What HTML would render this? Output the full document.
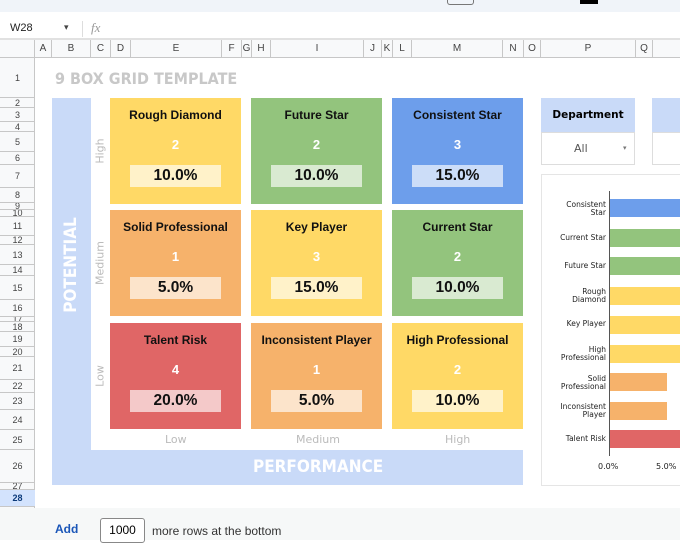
<!DOCTYPE html>
<html><head><meta charset="utf-8"><style>
*{margin:0;padding:0;box-sizing:border-box}
body{width:680px;height:540px;overflow:hidden;background:#fff;font-family:"Liberation Sans",sans-serif;position:relative}
.a{position:absolute}
.ch{position:absolute;top:40px;height:18px;border-right:1px solid #c7c7c7;font-size:10px;color:#444;text-align:center;line-height:18px}
.rh{position:absolute;left:0;width:35px;border-bottom:1px solid #c7c7c7;font-size:9px;color:#444;text-align:center;display:flex;align-items:center;justify-content:center;overflow:hidden}
.box{position:absolute;width:131px;height:106px;text-align:center;font-family:"Liberation Sans",sans-serif}
.box .t{position:absolute;top:10px;width:100%;font-size:12px;font-weight:bold;color:#111}
.box .n{position:absolute;top:39px;width:100%;font-size:13px;font-weight:bold;color:#fff}
.box .p{position:absolute;top:67px;left:20px;width:91px;height:22px;background:rgba(255,255,255,.65);font-size:15.5px;font-weight:bold;line-height:22px;color:#111}
.y{background:#ffd966}.g{background:#93c47d}.b{background:#6d9eeb}.o{background:#f6b26b}.r{background:#e06666}
.lbl{position:absolute;font-size:11px;color:#bbb;font-family:"DejaVu Sans",sans-serif}
.bl{position:absolute;right:74px;font-size:7.5px;color:#222;text-align:right;line-height:8px;font-family:"DejaVu Sans",sans-serif}
.bar{position:absolute;left:610px;height:18px}
</style></head><body>
<div class="a" style="left:0;top:0;width:680px;height:12px;background:#f0f4f9"></div>
<div class="a" style="left:447px;top:0;width:27px;height:5px;border:1px solid #777;border-top:none;border-radius:0 0 3px 3px"></div>
<div class="a" style="left:580px;top:0;width:18px;height:4px;background:#000"></div>
<div class="a" style="left:10px;top:22px;font-size:11px;color:#222">W28</div>
<div class="a" style="left:64px;top:22px;font-size:9px;color:#444">▾</div>
<div class="a" style="left:82px;top:21px;width:1px;height:16px;background:#ddd"></div>
<div class="a" style="left:91px;top:20px;font-size:13px;color:#999;font-style:italic;font-family:'Liberation Serif',serif">fx</div>
<div class="a" style="left:0;top:38px;width:680px;height:2px;background:#e1e1e1"></div>
<div class="a" style="left:0;top:40px;width:680px;height:18px;background:#f8f9fa;border-bottom:1px solid #c7c7c7"></div>
<div class="ch" style="left:0;width:35px"></div>
<div class="ch" style="left:35px;width:17px">A</div>
<div class="ch" style="left:52px;width:39px">B</div>
<div class="ch" style="left:91px;width:20px">C</div>
<div class="ch" style="left:111px;width:20px">D</div>
<div class="ch" style="left:131px;width:91px">E</div>
<div class="ch" style="left:222px;width:20px">F</div>
<div class="ch" style="left:242px;width:10px">G</div>
<div class="ch" style="left:252px;width:19px">H</div>
<div class="ch" style="left:271px;width:93px">I</div>
<div class="ch" style="left:364px;width:18px">J</div>
<div class="ch" style="left:382px;width:11px">K</div>
<div class="ch" style="left:393px;width:19px">L</div>
<div class="ch" style="left:412px;width:91px">M</div>
<div class="ch" style="left:503px;width:21px">N</div>
<div class="ch" style="left:524px;width:17px">O</div>
<div class="ch" style="left:541px;width:95px">P</div>
<div class="ch" style="left:636px;width:17px">Q</div>
<div class="a" style="left:0;top:58px;width:35px;height:450px;background:#f8f9fa;border-right:1px solid #c7c7c7"></div>
<div class="rh" style="top:58px;height:40px">1</div>
<div class="rh" style="top:98px;height:10px">2</div>
<div class="rh" style="top:108px;height:14px">3</div>
<div class="rh" style="top:122px;height:10px">4</div>
<div class="rh" style="top:132px;height:20px">5</div>
<div class="rh" style="top:152px;height:13px">6</div>
<div class="rh" style="top:165px;height:23px">7</div>
<div class="rh" style="top:188px;height:15px">8</div>
<div class="rh" style="top:203px;height:7px">9</div>
<div class="rh" style="top:210px;height:7px">10</div>
<div class="rh" style="top:217px;height:19px">11</div>
<div class="rh" style="top:236px;height:9px">12</div>
<div class="rh" style="top:245px;height:20px">13</div>
<div class="rh" style="top:265px;height:11px">14</div>
<div class="rh" style="top:276px;height:24px">15</div>
<div class="rh" style="top:300px;height:17px">16</div>
<div class="rh" style="top:317px;height:5px">17</div>
<div class="rh" style="top:322px;height:10px">18</div>
<div class="rh" style="top:332px;height:15px">19</div>
<div class="rh" style="top:347px;height:10px">20</div>
<div class="rh" style="top:357px;height:23px">21</div>
<div class="rh" style="top:380px;height:13px">22</div>
<div class="rh" style="top:393px;height:17px">23</div>
<div class="rh" style="top:410px;height:20px">24</div>
<div class="rh" style="top:430px;height:20px">25</div>
<div class="rh" style="top:450px;height:33px">26</div>
<div class="rh" style="top:483px;height:7px">27</div>
<div class="rh" style="top:490px;height:17px;background:#d3e3fd;font-weight:bold;color:#0b3a7a">28</div>
<div class="a" style="left:0;top:508px;width:680px;height:32px;background:#f6f8f8"></div>
<div class="a" style="left:55px;top:522px;font-size:12px;color:#1a56b8;font-weight:bold">Add</div>
<div class="a" style="left:100px;top:518px;width:45px;height:25px;border:1px solid #888;border-radius:3px;background:#fff;font-size:12px;text-align:center;line-height:23px">1000</div>
<div class="a" style="left:152px;top:524px;font-size:12px;color:#333">more rows at the bottom</div>

<div class="a" style="left:55px;top:69px;font-size:16px;font-weight:bold;color:#c8c8c8;font-family:'DejaVu Sans Condensed','DejaVu Sans',sans-serif">9 BOX GRID TEMPLATE</div>
<div class="a" style="left:52px;top:98px;width:471px;height:387px;background:#c9daf8"></div>
<div class="a" style="left:91px;top:98px;width:432px;height:352px;background:#fff"></div>
<div class="a" style="left:71px;top:265px;transform:translate(-50%,-50%) rotate(-90deg);font-size:17px;font-weight:bold;color:#fff;font-family:'DejaVu Sans Condensed',sans-serif;white-space:nowrap">POTENTIAL</div>
<div class="a" style="left:253px;top:457px;font-size:17px;font-weight:bold;color:#fff;font-family:'DejaVu Sans Condensed',sans-serif">PERFORMANCE</div>
<div class="lbl" style="left:100px;top:151px;transform:translate(-50%,-50%) rotate(-90deg)">High</div>
<div class="lbl" style="left:100px;top:263px;transform:translate(-50%,-50%) rotate(-90deg)">Medium</div>
<div class="lbl" style="left:100px;top:376px;transform:translate(-50%,-50%) rotate(-90deg)">Low</div>
<div class="lbl" style="left:165px;top:433px">Low</div>
<div class="lbl" style="left:296px;top:433px">Medium</div>
<div class="lbl" style="left:445px;top:433px">High</div>

<div class="box y" style="left:110px;top:98px"><div class="t">Rough Diamond</div><div class="n">2</div><div class="p">10.0%</div></div>
<div class="box g" style="left:251px;top:98px"><div class="t">Future Star</div><div class="n">2</div><div class="p">10.0%</div></div>
<div class="box b" style="left:392px;top:98px"><div class="t">Consistent Star</div><div class="n">3</div><div class="p">15.0%</div></div>
<div class="box o" style="left:110px;top:210px"><div class="t">Solid Professional</div><div class="n">1</div><div class="p">5.0%</div></div>
<div class="box y" style="left:251px;top:210px"><div class="t">Key Player</div><div class="n">3</div><div class="p">15.0%</div></div>
<div class="box g" style="left:392px;top:210px"><div class="t">Current Star</div><div class="n">2</div><div class="p">10.0%</div></div>
<div class="box r" style="left:110px;top:323px"><div class="t">Talent Risk</div><div class="n">4</div><div class="p">20.0%</div></div>
<div class="box o" style="left:251px;top:323px"><div class="t">Inconsistent Player</div><div class="n">1</div><div class="p">5.0%</div></div>
<div class="box y" style="left:392px;top:323px"><div class="t">High Professional</div><div class="n">2</div><div class="p">10.0%</div></div>

<div class="a" style="left:541px;top:98px;width:94px;height:34px;background:#c9daf8;text-align:center;line-height:34px;font-size:10.5px;font-weight:bold;font-family:'DejaVu Sans',sans-serif">Department</div>
<div class="a" style="left:541px;top:132px;width:94px;height:33px;border:1px solid #ddd;font-size:11px;color:#555;line-height:31px;padding-left:32px;font-family:'DejaVu Sans',sans-serif">All<span style="position:absolute;left:81px;font-size:7px;color:#777">▾</span></div>
<div class="a" style="left:652px;top:98px;width:30px;height:34px;background:#c9daf8"></div>
<div class="a" style="left:652px;top:132px;width:30px;height:33px;border:1px solid #ddd"></div>

<div class="a" style="left:541px;top:174px;width:145px;height:312px;border:1px solid #e5e5e5;background:#fff"></div>
<div class="a" style="left:609px;top:191px;width:1px;height:265px;background:#555"></div>
<div class="bar b" style="top:199px;width:80px"></div>
<div class="bar g" style="top:229px;width:80px"></div>
<div class="bar g" style="top:257px;width:80px"></div>
<div class="bar y" style="top:287px;width:80px"></div>
<div class="bar y" style="top:316px;width:80px"></div>
<div class="bar y" style="top:345px;width:80px"></div>
<div class="bar o" style="top:373px;width:57px"></div>
<div class="bar o" style="top:402px;width:57px"></div>
<div class="bar r" style="top:430px;width:80px"></div>
<div class="bl" style="top:201px">Consistent<br>Star</div>
<div class="bl" style="top:234px">Current Star</div>
<div class="bl" style="top:262px">Future Star</div>
<div class="bl" style="top:288px">Rough<br>Diamond</div>
<div class="bl" style="top:320px">Key Player</div>
<div class="bl" style="top:346px">High<br>Professional</div>
<div class="bl" style="top:375px">Solid<br>Professional</div>
<div class="bl" style="top:403px">Inconsistent<br>Player</div>
<div class="bl" style="top:435px">Talent Risk</div>
<div class="a" style="left:598px;top:462px;font-size:8px;color:#222;font-family:'DejaVu Sans',sans-serif">0.0%</div>
<div class="a" style="left:656px;top:462px;font-size:8px;color:#222;font-family:'DejaVu Sans',sans-serif">5.0%</div>
</body></html>
